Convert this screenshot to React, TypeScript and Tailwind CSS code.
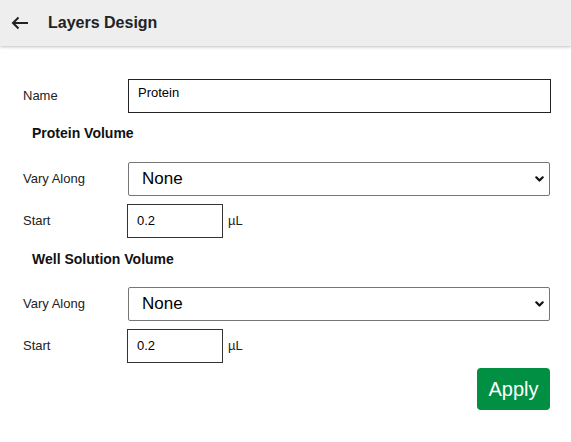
import React from 'react';

const FONT = { fontFamily: '"Liberation Sans", Arial, sans-serif' };

function Chevron() {
  return (
    <svg className="w-[9px] h-[6px]" viewBox="0 0 9 6" fill="none" stroke="#111" strokeWidth={2.2} strokeLinecap="round" strokeLinejoin="round">
      <path d="M1.3 1.3 4.5 4.5l3.2-3.2" />
    </svg>
  );
}

function SelectRow() {
  return (
    <div className="flex items-center">
      <label className="w-[105px] text-[13px] text-[#222]">Vary Along</label>
      <div className="relative w-[422px] h-[34px] border border-[#767676] rounded-[2px] flex items-center pl-[13px] pr-[5px] justify-between bg-white">
        <span className="text-[17px] text-black">None</span>
        <Chevron />
      </div>
    </div>
  );
}

function StartRow() {
  return (
    <div className="flex items-center">
      <label className="w-[104px] text-[13px] text-[#222]">Start</label>
      <div className="w-[96px] h-[34px] border border-[#333] flex items-center pl-[9px] text-[13px] text-black">0.2</div>
      <span className="ml-[5px] text-[13px] text-[#222]">µL</span>
    </div>
  );
}

export default function App() {
  return (
    <div className="w-[571px] h-[442px] bg-white overflow-hidden" style={FONT}>
      <div className="h-[46px] bg-[#eeeeee] flex items-center shadow-[0_1px_3px_rgba(0,0,0,0.25)] relative">
        <svg className="ml-[11px] w-[18px] h-[14px]" viewBox="0 0 18 14" fill="none" stroke="#222" strokeWidth={2}>
          <path d="M17 7H2M7.5 1.5 2 7l5.5 5.5" />
        </svg>
        <span className="ml-[19px] text-[16px] font-bold text-[#222]">Layers Design</span>
      </div>

      <div className="pl-[23px]">
        <div className="flex items-center mt-[33px]">
          <label className="w-[105px] text-[13px] text-[#222]">Name</label>
          <div className="w-[423px] h-[34px] border border-[#222] pl-[9px] pt-[3px] text-[13px] text-black">Protein</div>
        </div>

        <h3 className="ml-[9px] mt-[12px] text-[14px] font-bold text-[#111] leading-[16px]">Protein Volume</h3>
        <div className="mt-[21px]">
          <SelectRow />
        </div>
        <div className="mt-[8px]">
          <StartRow />
        </div>

        <h3 className="ml-[9px] mt-[13px] text-[14px] font-bold text-[#111] leading-[16px]">Well Solution Volume</h3>
        <div className="mt-[20px]">
          <SelectRow />
        </div>
        <div className="mt-[8px]">
          <StartRow />
        </div>

        <div className="flex justify-end w-[527px] mt-[5px]">
          <button className="w-[73px] h-[42px] bg-[#008f43] rounded-[4px] text-white text-[20px]">Apply</button>
        </div>
      </div>
    </div>
  );
}
